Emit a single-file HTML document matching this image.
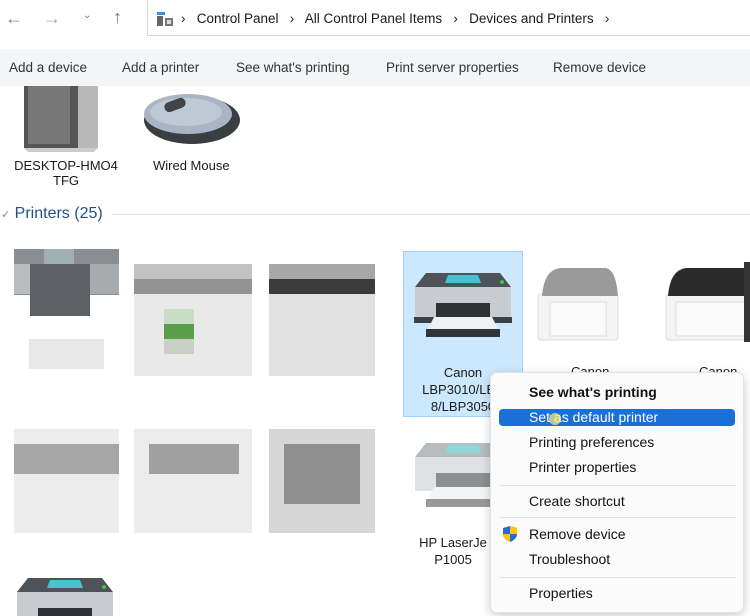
<!DOCTYPE html>
<html><head><meta charset="utf-8"><style>
*{margin:0;padding:0;box-sizing:border-box}
body{width:750px;height:615px;overflow:hidden;background:#fff;font-family:"Liberation Sans",sans-serif;font-size:13.5px;color:#1a1a1a;position:relative}
.a{position:absolute}
.t{position:absolute;white-space:nowrap}
.mi{position:absolute;left:529px;font-size:14px;color:#111}
.sep{position:absolute;left:500px;width:236px;height:1px;background:#e3e3e3}
</style></head><body>
<div class="t" style="left:5px;top:8px;font-size:18px;color:#888">&#8592;</div>
<div class="t" style="left:43px;top:8px;font-size:18px;color:#aaa">&#8594;</div>
<div class="t" style="left:83px;top:10px;font-size:10px;color:#777">&#8964;</div>
<div class="t" style="left:113px;top:7px;font-size:18px;color:#777">&#8593;</div>
<div class="a" style="left:147px;top:-2px;width:610px;height:38px;border:1px solid #d8d8d8;background:#fff"></div>
<svg class="a" style="left:156px;top:10px" width="20" height="18"><rect x="1" y="2" width="8" height="3" fill="#3a8fd8"/><rect x="1" y="6" width="6" height="10" fill="#666"/><rect x="9" y="8" width="8" height="8" fill="#777"/><rect x="11" y="10" width="4" height="4" fill="#ddd"/></svg>
<div class="t" style="left:181px;top:11px;font-size:13.5px">›&nbsp;&nbsp; Control Panel &nbsp;&nbsp;›&nbsp;&nbsp; All Control Panel Items &nbsp;&nbsp;›&nbsp;&nbsp; Devices and Printers &nbsp;&nbsp;›</div>
<div class="a" style="left:0;top:49px;width:750px;height:37px;background:#f4f5f6"></div>
<div class="t" style="left:9px;top:60px;font-size:13.5px;color:#333">Add a device</div>
<div class="t" style="left:122px;top:60px;font-size:13.5px;color:#333">Add a printer</div>
<div class="t" style="left:236px;top:60px;font-size:13.5px;color:#333">See what's printing</div>
<div class="t" style="left:386px;top:60px;font-size:13.5px;color:#333">Print server properties</div>
<div class="t" style="left:553px;top:60px;font-size:13.5px;color:#333">Remove device</div>
<svg class="a" style="left:24px;top:86px" width="80" height="66"><rect x="0" y="0" width="54" height="62" fill="#555"/><rect x="4" y="0" width="42" height="58" fill="#777"/><rect x="54" y="0" width="20" height="62" fill="#b8b8b8"/><polygon points="0,62 74,62 70,66 4,66" fill="#ccc"/></svg>
<svg class="a" style="left:142px;top:90px" width="100" height="56"><ellipse cx="50" cy="30" rx="48" ry="24" fill="#3a3d42"/><ellipse cx="46" cy="24" rx="44" ry="20" fill="#a9b5c4"/><ellipse cx="44" cy="22" rx="36" ry="14" fill="#bfc9d5"/><rect x="22" y="10" width="22" height="10" rx="5" fill="#40444a" transform="rotate(-20 33 15)"/></svg>
<div class="t" style="left:14px;top:158px;font-size:13px;text-align:center;width:104px">DESKTOP-HMO4<br>TFG</div>
<div class="t" style="left:153px;top:158px;font-size:13px">Wired Mouse</div>
<div class="t" style="left:1px;top:205px;font-size:16px;color:#1e4f8c"><span style="font-size:11px;color:#888">&#10003;</span> Printers (25)</div>
<div class="a" style="left:112px;top:214px;width:638px;height:1px;background:#e5e5e5"></div>
<div class="a" style="left:14px;top:249px;width:105px;height:46px;background:#8a8e92"></div>
<div class="a" style="left:30px;top:264px;width:60px;height:52px;background:#5d6166"></div>
<div class="a" style="left:44px;top:249px;width:30px;height:15px;background:#9fb0b0"></div>
<div class="a" style="left:14px;top:264px;width:16px;height:30px;background:#b9bcbf"></div>
<div class="a" style="left:90px;top:264px;width:29px;height:30px;background:#a8abae"></div>
<div class="a" style="left:29px;top:339px;width:75px;height:30px;background:#e7e7e7"></div>
<div class="a" style="left:134px;top:264px;width:118px;height:15px;background:#c2c2c2"></div>
<div class="a" style="left:134px;top:279px;width:118px;height:15px;background:#949494"></div>
<div class="a" style="left:134px;top:294px;width:118px;height:82px;background:#e9e9e9"></div>
<div class="a" style="left:164px;top:309px;width:30px;height:15px;background:#c9dcc4"></div>
<div class="a" style="left:164px;top:324px;width:30px;height:15px;background:#5a9e4a"></div>
<div class="a" style="left:164px;top:339px;width:30px;height:15px;background:#c8d0c6"></div>
<div class="a" style="left:269px;top:264px;width:106px;height:15px;background:#a7a7a7"></div>
<div class="a" style="left:269px;top:279px;width:106px;height:15px;background:#3b3b3b"></div>
<div class="a" style="left:269px;top:294px;width:106px;height:82px;background:#e1e1e1"></div>
<div class="a" style="left:14px;top:429px;width:105px;height:104px;background:#ececec"></div>
<div class="a" style="left:14px;top:444px;width:105px;height:30px;background:#a6a6a6"></div>
<div class="a" style="left:134px;top:429px;width:118px;height:104px;background:#ececec"></div>
<div class="a" style="left:149px;top:444px;width:90px;height:30px;background:#a0a0a0"></div>
<div class="a" style="left:269px;top:429px;width:106px;height:104px;background:#d6d6d6"></div>
<div class="a" style="left:284px;top:444px;width:76px;height:60px;background:#8f8f8f"></div>
<div class="a" style="left:403px;top:251px;width:120px;height:166px;background:#cce8ff;border:1px solid #99d1ff"></div>
<svg class="a" style="left:414px;top:271px" width="98" height="70"><polygon points="12,2 86,2 97,16 1,16" fill="#4d5358"/><polygon points="34,4 64,4 67,12 31,12" fill="#46c3cf"/><rect x="1" y="16" width="96" height="34" fill="#c8ccd0"/><rect x="22" y="32" width="54" height="18" fill="#2e3236"/><rect x="0" y="46" width="98" height="6" fill="#3b4045"/><polygon points="20,46 78,46 84,58 14,58" fill="#eef0f2"/><rect x="12" y="58" width="74" height="8" fill="#30353a"/><circle cx="88" cy="11" r="2" fill="#3c3"/></svg>
<div class="t" style="left:403px;top:364px;width:120px;text-align:center;font-size:13px;line-height:17px">Canon<br>LBP3010/LBP<br>8/LBP3050</div>
<svg class="a" style="left:536px;top:266px" width="84" height="76"><rect x="2" y="28" width="80" height="46" rx="3" fill="#f4f4f4" stroke="#ddd"/><path d="M6 30 Q8 4 24 2 L70 2 Q80 4 82 30 Z" fill="#9a9a9a"/><rect x="14" y="36" width="56" height="34" fill="#fafafa" stroke="#ddd"/></svg>
<svg class="a" style="left:664px;top:266px" width="86" height="76"><rect x="2" y="28" width="84" height="46" rx="3" fill="#f4f4f4" stroke="#ddd"/><path d="M4 30 Q6 4 22 2 L86 2 L86 30 Z" fill="#2a2a2a"/><rect x="12" y="36" width="70" height="34" fill="#fafafa" stroke="#ddd"/></svg>
<div class="a" style="left:744px;top:262px;width:6px;height:80px;background:#333"></div>
<div class="t" style="left:571px;top:364px;font-size:13px">Canon</div>
<div class="t" style="left:699px;top:364px;font-size:13px">Canon</div>
<svg class="a" style="left:414px;top:441px" width="80" height="70"><polygon points="12,2 86,2 97,16 1,16" fill="#b7bcc0"/><polygon points="34,4 64,4 67,12 31,12" fill="#8fd6dc"/><rect x="1" y="16" width="96" height="34" fill="#dfe1e3"/><rect x="22" y="32" width="54" height="18" fill="#8c8f92"/><polygon points="20,46 78,46 84,58 14,58" fill="#f4f4f4"/><rect x="12" y="58" width="74" height="8" fill="#999"/></svg>
<div class="t" style="left:414px;top:534px;width:78px;font-size:13px;line-height:17px;text-align:center">HP LaserJe<br>P1005</div>
<svg class="a" style="left:16px;top:576px" width="98" height="40"><polygon points="12,2 86,2 97,16 1,16" fill="#4d5358"/><polygon points="34,4 64,4 67,12 31,12" fill="#46c3cf"/><rect x="1" y="16" width="96" height="24" fill="#c8ccd0"/><rect x="22" y="32" width="54" height="8" fill="#2e3236"/><circle cx="88" cy="11" r="2" fill="#3c3"/></svg>
<div class="a" style="left:490px;top:372px;width:254px;height:241px;background:#fbfbfb;border:1px solid #e2e2e2;border-radius:7px;box-shadow:0 3px 10px rgba(0,0,0,.2)"></div>
<div class="mi" style="top:384px;font-weight:bold">See what's printing</div>
<div class="a" style="left:499px;top:409px;width:236px;height:17px;background:#1a6fd8;border-radius:4px"></div>
<div class="mi" style="top:409px;color:#fff">Set as default printer</div>
<div class="a" style="left:549px;top:413px;width:12px;height:12px;border-radius:50%;background:rgba(255,240,120,.7)"></div>
<div class="mi" style="top:434px">Printing preferences</div>
<div class="mi" style="top:459px">Printer properties</div>
<div class="sep" style="top:485px"></div>
<div class="mi" style="top:493px">Create shortcut</div>
<div class="sep" style="top:517px"></div>
<svg class="a" style="left:502px;top:525px" width="16" height="18"><path d="M8 1 L15 3 L15 9 Q15 14 8 17 Q1 14 1 9 L1 3 Z" fill="#2a6ad0"/><path d="M8 1 L15 3 L15 9 L8 9 Z M1 9 L8 9 L8 17 Q1 14 1 9 Z" fill="#f5c518"/></svg>
<div class="mi" style="top:526px">Remove device</div>
<div class="mi" style="top:551px">Troubleshoot</div>
<div class="sep" style="top:577px"></div>
<div class="mi" style="top:585px">Properties</div>
</body></html>
